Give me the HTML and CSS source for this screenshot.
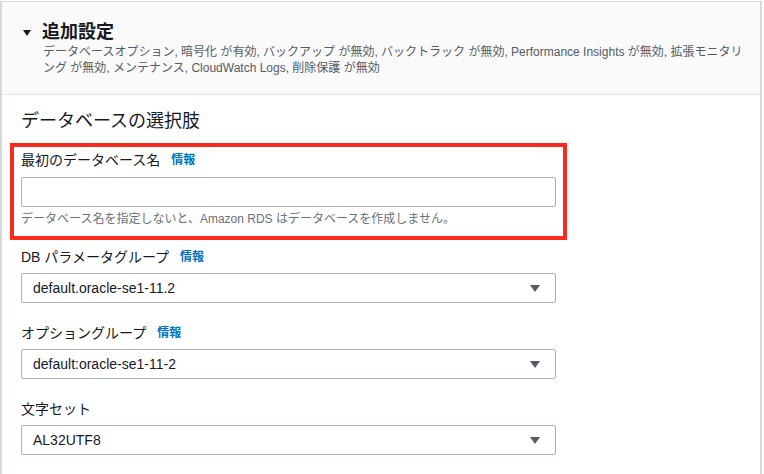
FILE: index.html
```html
<!DOCTYPE html>
<html lang="ja">
<head>
<meta charset="utf-8">
<title>追加設定</title>
<link rel="stylesheet" href="styles.css">
</head>
<body>
<div class="panel">
  <div class="panel-header">
    <div class="title-row">
      <span class="expand-caret"></span>
      <h2 class="title">追加設定</h2>
    </div>
    <p class="summary">データベースオプション, 暗号化 が有効, バックアップ が無効, バックトラック が無効, Performance Insights が無効, 拡張モニタリング が無効, メンテナンス, CloudWatch Logs, 削除保護 が無効</p>
  </div>
  <div class="panel-body">
    <h3 class="section-title">データベースの選択肢</h3>
    <div class="highlight">
      <div class="field">
        <div class="label">最初のデータベース名<a class="info">情報</a></div>
        <div class="input"></div>
        <div class="hint">データベース名を指定しないと、Amazon RDS はデータベースを作成しません。</div>
      </div>
    </div>
    <div class="field field-gap-first">
      <div class="label">DB パラメータグループ<a class="info">情報</a></div>
      <div class="select"><span>default.oracle-se1-11.2</span><span class="select-caret"></span></div>
    </div>
    <div class="field field-gap">
      <div class="label">オプショングループ<a class="info">情報</a></div>
      <div class="select"><span>default:oracle-se1-11-2</span><span class="select-caret"></span></div>
    </div>
    <div class="field field-gap">
      <div class="label">文字セット</div>
      <div class="select"><span>AL32UTF8</span><span class="select-caret"></span></div>
    </div>
  </div>
</div>
</body>
</html>
```
FILE: styles.css
```css
html, body {
  margin: 0;
  padding: 0;
  background: #ffffff;
}
body {
  font-family: "Liberation Sans", "Noto Sans CJK JP", sans-serif;
  color: #16191f;
}
.panel {
  box-sizing: border-box;
  width: 762px;
  height: 480px;
  margin-top: 1px;
  border: 1px solid #d5dbdb;
  border-left-width: 2px;
  border-right-width: 2px;
  overflow: hidden;
}
.panel-header {
  background: #fafafa;
  border-bottom: 1px solid #e4e8e8;
  padding: 18px 20px 18px 20px;
}
.title-row {
  display: flex;
  align-items: center;
  height: 24px;
}
.expand-caret {
  width: 0;
  height: 0;
  border-left: 4.5px solid transparent;
  border-right: 4.5px solid transparent;
  border-top: 6px solid #16191f;
  margin: 1px 11px 0 1px;
}
.title {
  margin: 0;
  font-size: 18px;
  font-weight: 700;
  line-height: 24px;
}
.summary {
  margin: 0;
  padding-left: 21px;
  font-size: 12px;
  line-height: 16px;
  color: #545b64;
  width: 700px;
}
.panel-body {
  padding: 14px 20px 0 19px;
}
.section-title {
  margin: 0;
  font-size: 18px;
  font-weight: 400;
  line-height: 24px;
}
.highlight {
  margin: 10px 0 0 -11px;
  width: 557px;
  box-sizing: border-box;
  border: 4px solid #fa2a1e;
  padding: 3px 0 9px 7px;
}
.label {
  font-size: 14px;
  line-height: 20px;
  display: flex;
  align-items: center;
}
.info {
  margin-left: 11px;
  font-size: 12px;
  font-weight: 700;
  color: #0073bb;
}
.input {
  box-sizing: border-box;
  width: 535px;
  height: 30px;
  margin-top: 7px;
  border: 1px solid #aab7b8;
  border-radius: 2px;
  background: #fff;
}
.hint {
  margin-top: 4px;
  font-size: 12px;
  line-height: 16px;
  color: #687078;
}
.field-gap-first {
  margin-top: 7px;
}
.field-gap {
  margin-top: 20px;
}
.select {
  box-sizing: border-box;
  width: 535px;
  height: 30px;
  margin-top: 6px;
  border: 1px solid #aab7b8;
  border-radius: 2px;
  background: #fff;
  display: flex;
  align-items: center;
  justify-content: space-between;
  padding: 0 15px 0 11px;
  font-size: 14px;
}
.select-caret {
  width: 0;
  height: 0;
  border-left: 5px solid transparent;
  border-right: 5px solid transparent;
  border-top: 7px solid #545b64;
  margin-top: 1px;
}
```
